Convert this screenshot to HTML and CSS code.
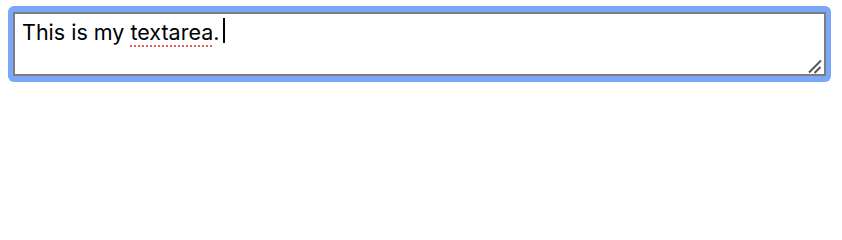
FILE: index.html
```html
<!DOCTYPE html>
<html>
<head>
<meta charset="utf-8">
<link rel="stylesheet" href="styles.css">
</head>
<body>
<div class="ring">
  <div class="field">
    <div class="text">This is my <span class="misspelt">textarea</span>.<span class="caret"></span></div>
    <svg class="grip" width="16" height="16" viewBox="0 0 16 16">
      <line x1="1" y1="13.5" x2="13" y2="1.5" stroke="#555555" stroke-width="2"/>
      <line x1="6.5" y1="14" x2="12.5" y2="8" stroke="#555555" stroke-width="2"/>
    </svg>
  </div>
</div>
</body>
</html>
```
FILE: styles.css
```css
html, body {
  margin: 0;
  padding: 0;
  background: #ffffff;
}
.ring {
  margin: 6px 11px 0 8px;
  padding: 6px 5px 6px 5px;
  background: #7aa7f7;
  border-radius: 6px;
}
.field {
  position: relative;
  box-sizing: border-box;
  height: 64px;
  border: 2px solid #7e7e7e;
  background: #ffffff;
  padding: 4px 6px 0 7px;
}
.text {
  font-family: Inter, "Liberation Sans", sans-serif;
  font-size: 21.5px;
  line-height: 28px;
  color: #000000;
  display: flex;
  align-items: flex-start;
  white-space: pre;
}
.misspelt {
  text-decoration: underline dotted #e0605f;
  text-decoration-thickness: 2px;
  text-underline-offset: 5px;
}
.caret {
  display: inline-block;
  width: 0;
  height: 25px;
  border-left: 2px solid #000000;
  margin-left: 4px;
  margin-top: 0;
}
.grip {
  position: absolute;
  right: 0;
  bottom: -1px;
}
```
